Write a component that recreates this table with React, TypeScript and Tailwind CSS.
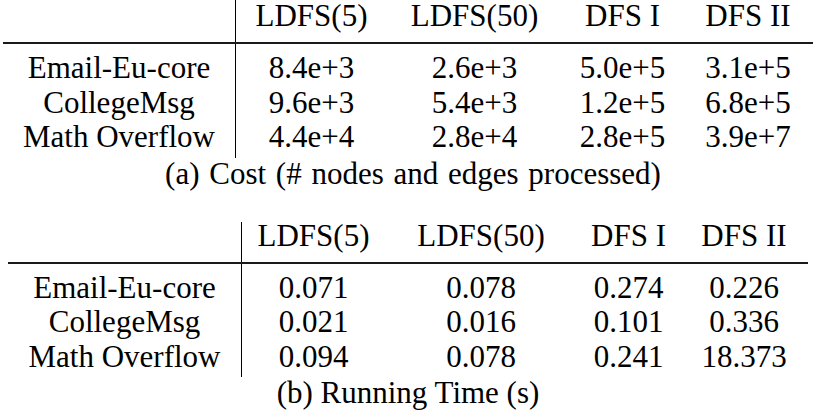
import React from "react";

type Row = { name: string; vals: string[] };

const costRows: Row[] = [
  { name: "Email-Eu-core", vals: ["8.4e+3", "2.6e+3", "5.0e+5", "3.1e+5"] },
  { name: "CollegeMsg", vals: ["9.6e+3", "5.4e+3", "1.2e+5", "6.8e+5"] },
  { name: "Math Overflow", vals: ["4.4e+4", "2.8e+4", "2.8e+5", "3.9e+7"] },
];

const timeRows: Row[] = [
  { name: "Email-Eu-core", vals: ["0.071", "0.078", "0.274", "0.226"] },
  { name: "CollegeMsg", vals: ["0.021", "0.016", "0.101", "0.336"] },
  { name: "Math Overflow", vals: ["0.094", "0.078", "0.241", "18.373"] },
];

const headers = ["LDFS(5)", "LDFS(50)", "DFS I", "DFS II"];

function Cells({ rows, col }: { rows: Row[]; col: number }) {
  return (
    <div className="flex flex-col items-center pt-[7px] pb-[3px]">
      {rows.map((r) => (
        <div key={r.name} className="leading-[34.5px] whitespace-nowrap">
          {col === 0 ? r.name : r.vals[col - 1]}
        </div>
      ))}
    </div>
  );
}

export default function App() {
  return (
    <div className="w-[818px] h-[414px] bg-white text-black font-['Liberation_Serif'] text-[31px] overflow-hidden">
      {/* Table (a) */}
      <div className="ml-[3px] w-[810px]">
        <div className="grid grid-cols-[233px_151px_175px_121px_130px] h-[42px] leading-[28px]">
          <div className="border-r border-black h-full" />
          {headers.map((h) => (
            <div key={h} className="text-center whitespace-nowrap pt-[2px]">
              {h}
            </div>
          ))}
        </div>
        <div className="h-[2px] bg-[#1a1a1a]" />
        <div className="grid grid-cols-[233px_151px_175px_121px_130px]">
          <div className="border-r border-black">
            <Cells rows={costRows} col={0} />
          </div>
          <Cells rows={costRows} col={1} />
          <Cells rows={costRows} col={2} />
          <Cells rows={costRows} col={3} />
          <Cells rows={costRows} col={4} />
        </div>
        <div className="text-center leading-[31px] whitespace-nowrap [word-spacing:2px] pl-[10px]">
          (a) Cost (# nodes and edges processed)
        </div>
      </div>

      {/* Table (b) */}
      <div className="ml-[8px] w-[800px] mt-[33px]">
        <div className="grid grid-cols-[234px_143px_192px_103px_128px] h-[40px] leading-[27px]">
          <div className="border-r border-black h-full" />
          {headers.map((h) => (
            <div key={h} className="text-center whitespace-nowrap">
              {h}
            </div>
          ))}
        </div>
        <div className="h-[2px] bg-[#1a1a1a]" />
        <div className="grid grid-cols-[234px_143px_192px_103px_128px]">
          <div className="border-r border-black">
            <Cells rows={timeRows} col={0} />
          </div>
          <Cells rows={timeRows} col={1} />
          <Cells rows={timeRows} col={2} />
          <Cells rows={timeRows} col={3} />
          <Cells rows={timeRows} col={4} />
        </div>
        <div className="text-center leading-[31px] whitespace-nowrap">
          (b) Running Time (s)
        </div>
      </div>
    </div>
  );
}
